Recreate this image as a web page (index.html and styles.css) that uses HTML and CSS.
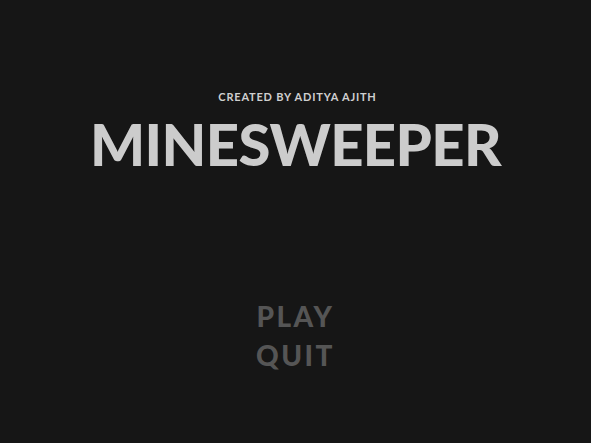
FILE: index.html
```html
<!DOCTYPE html>
<html>
<head>
<meta charset="utf-8">
<link rel="stylesheet" href="styles.css">
</head>
<body>
<main class="screen">
  <header class="title-block">
    <p class="credit">CREATED BY ADITYA AJITH</p>
    <h1 class="title">MINESWEEPER</h1>
  </header>
  <nav class="menu">
    <a class="menu-item">PLAY</a>
    <a class="menu-item">QUIT</a>
  </nav>
</main>
</body>
</html>
```
FILE: styles.css
```css
html, body {
  margin: 0;
  padding: 0;
  background: #161616;
  height: 100%;
}
.screen {
  height: 443px;
  display: flex;
  flex-direction: column;
  align-items: center;
  font-family: "Lato", "Liberation Sans", sans-serif;
  font-weight: 700;
}
.title-block {
  display: flex;
  flex-direction: column;
  align-items: center;
  padding-top: 90px;
}
.credit {
  margin: 0;
  color: #cfcfcf;
  font-size: 11px;
  letter-spacing: 0.8px;
  line-height: 14px;
  padding-left: 4px;
}
.title {
  margin: 11px 0 0 0;
  color: #cccccc;
  font-size: 58px;
  letter-spacing: -0.6px;
  line-height: 58px;
  font-weight: 900;
}
.menu {
  display: flex;
  flex-direction: column;
  align-items: center;
  margin-top: 129px;
  gap: 11px;
}
.menu-item {
  color: #555555;
  font-size: 28px;
  line-height: 28px;
  letter-spacing: 2.5px;
  font-weight: 900;
  cursor: pointer;
}
```
